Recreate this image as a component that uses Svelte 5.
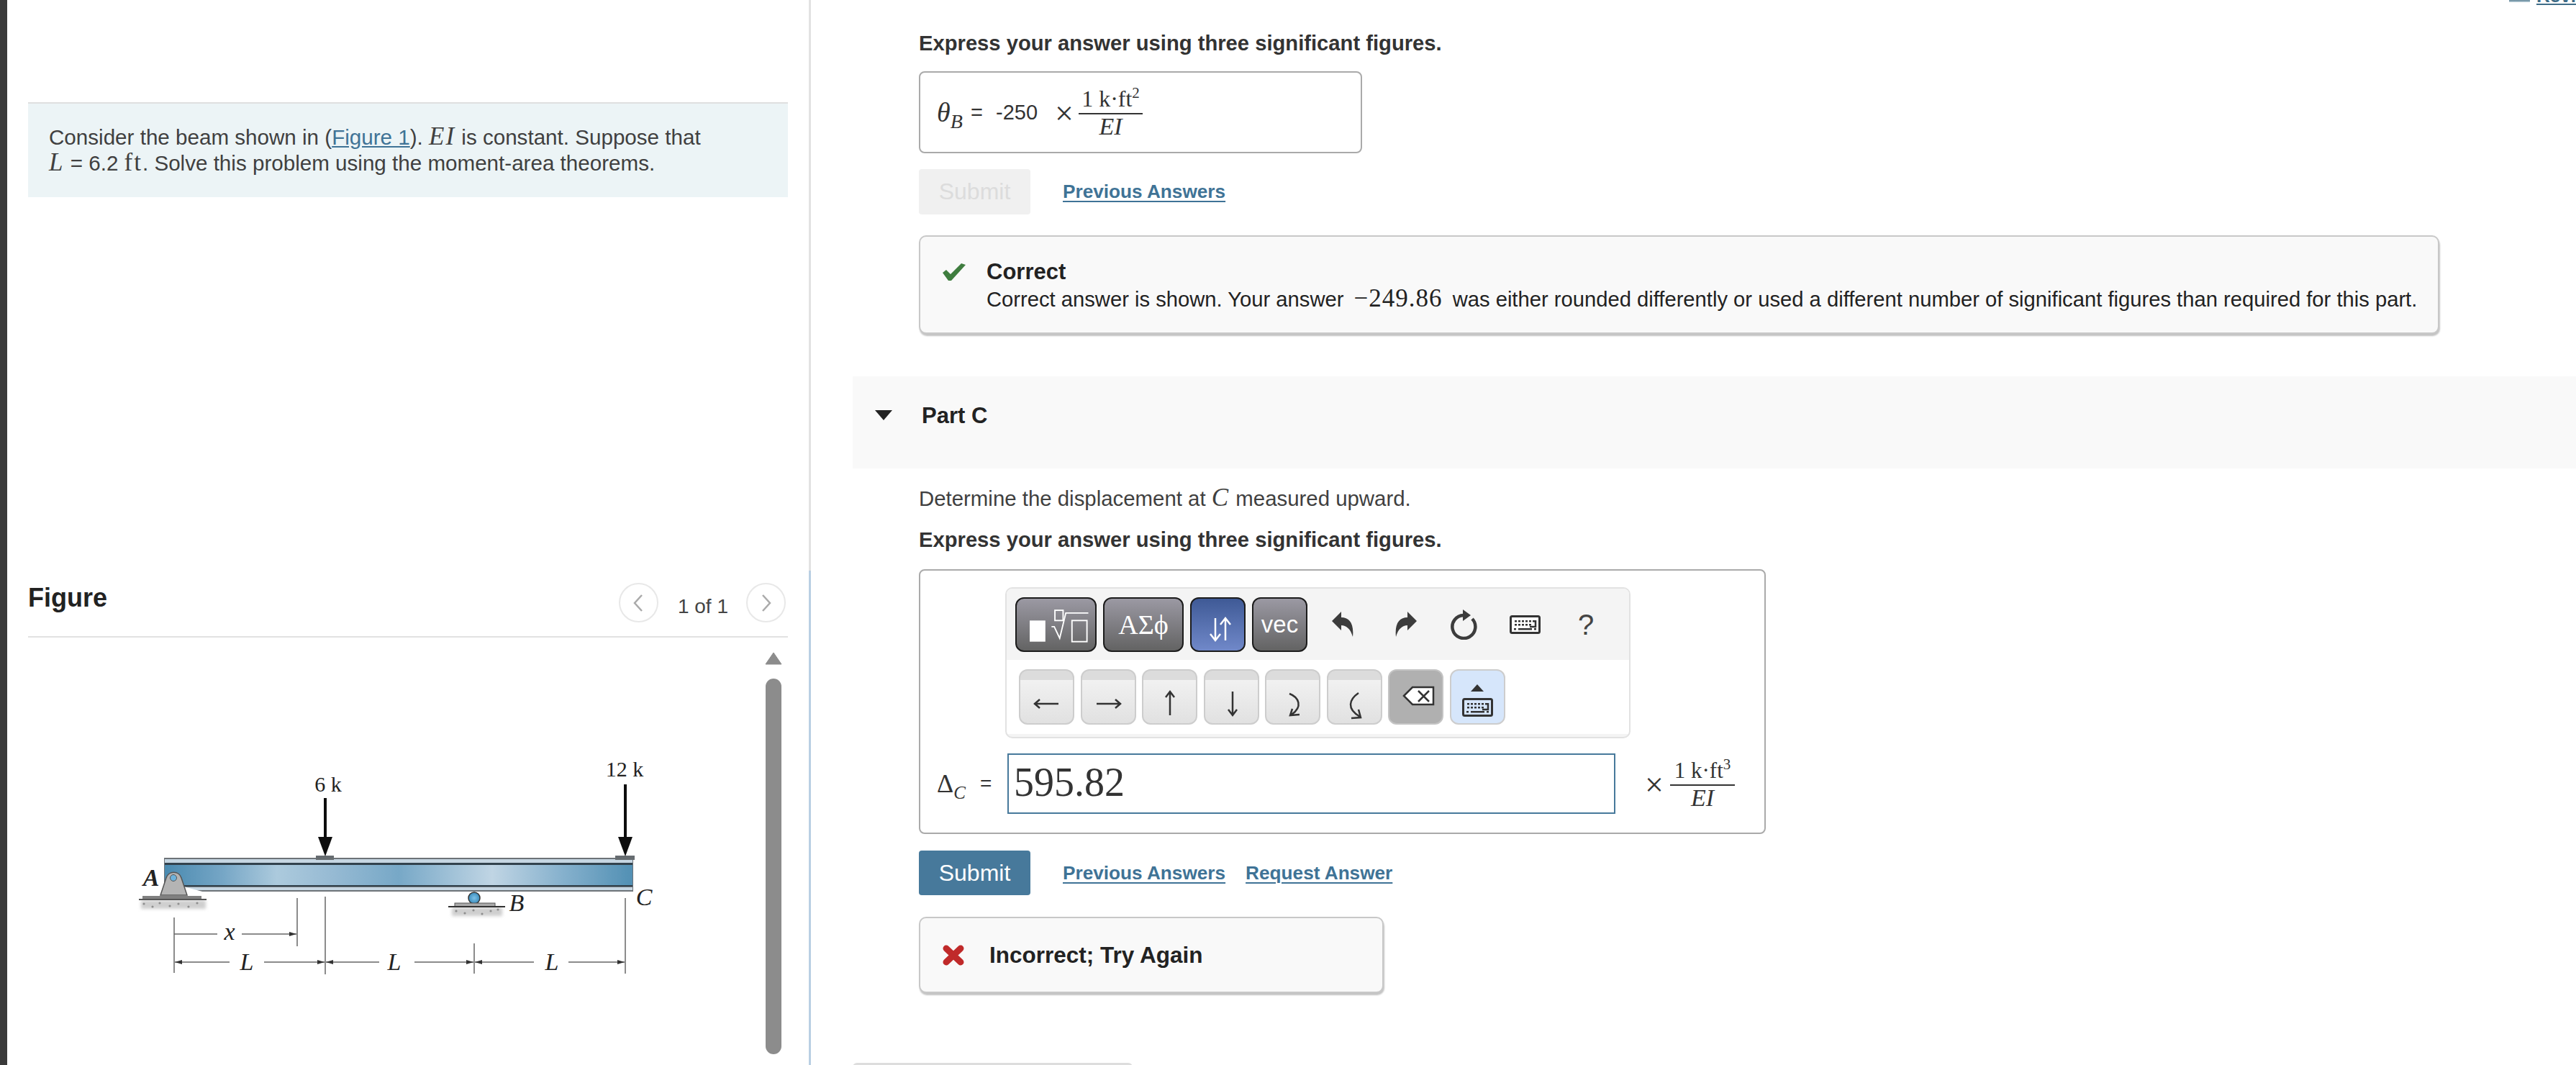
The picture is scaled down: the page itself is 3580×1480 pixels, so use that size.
<script>
  const kbDots = [];
  for (let i = 0; i < 6; i++) kbDots.push([7 + i * 5, 8]);
  for (let i = 0; i < 5; i++) kbDots.push([7 + i * 5, 13]);
  const ticks = [
    [242, 1275, 242, 1352], [413, 1248, 413, 1315], [452, 1246, 452, 1354],
    [659, 1311, 659, 1353], [869, 1248, 869, 1353],
    [242, 1298, 302, 1298], [336, 1298, 412, 1298],
    [243, 1337, 319, 1337], [367, 1337, 451, 1337],
    [453, 1337, 527, 1337], [576, 1337, 658, 1337],
    [660, 1337, 742, 1337], [790, 1337, 868, 1337]
  ];
  const heads = [
    [412, 1298, -1], [243, 1337, 1], [451, 1337, -1], [453, 1337, 1],
    [658, 1337, -1], [660, 1337, 1], [868, 1337, -1]
  ];
  const ground = [
    [200, 1256], [212, 1260], [222, 1255], [236, 1259], [248, 1256], [262, 1260], [274, 1255],
    [634, 1266], [646, 1269], [658, 1265], [670, 1270], [682, 1266], [692, 1264]
  ];
</script>

{#snippet keyboard(bg)}
  <svg class="kb" viewBox="0 0 43 26" aria-hidden="true">
    <rect x="1.5" y="1.5" width="40" height="23" rx="2" fill={bg} stroke="#333" stroke-width="3" />
    {#each kbDots as d}<rect x={d[0]} y={d[1] - 1} width="3" height="2.5" fill="#333" />{/each}
    <path d="M36 7v9H28" fill="none" stroke="#333" stroke-width="2.5" />
    <rect x="12" y="18" width="19" height="2.5" fill="#333" />
    <rect x="6" y="18" width="3" height="2.5" fill="#333" />
    <rect x="34" y="18" width="3" height="2.5" fill="#333" />
  </svg>
{/snippet}

<div class="page">
  <div class="strip"></div>

  <aside class="left">
    <div class="intro">
      <p>Consider the beam shown in (<a href="#f">Figure 1</a>). <i class="m big">EI</i> is constant. Suppose that<br /><i class="m big">L</i> = 6.2 <span class="m big">ft</span>. Solve this problem using the moment-area theorems.</p>
    </div>

    <div class="fig-head">
      <h2>Figure</h2>
      <div class="pager">
        <span class="circle"><svg viewBox="0 0 14 26" width="14" height="26"><path d="M12 2 2 13l10 11" fill="none" stroke="#aaa" stroke-width="2.5" /></svg></span>
        <span class="count">1 of 1</span>
        <span class="circle"><svg viewBox="0 0 14 26" width="14" height="26"><path d="M2 2l10 11L2 24" fill="none" stroke="#aaa" stroke-width="2.5" /></svg></span>
      </div>
    </div>

    <div class="fig-body">
      <svg class="diagram" viewBox="39 886 1020 594" aria-label="Beam diagram">
        <defs>
          <linearGradient id="web" x1="0" x2="1" y1="0" y2="0">
            <stop offset="0" stop-color="#4a8ab0" />
            <stop offset="0.12" stop-color="#74a5c5" />
            <stop offset="0.24" stop-color="#accadd" />
            <stop offset="0.36" stop-color="#96bad3" />
            <stop offset="0.5" stop-color="#77a8c7" />
            <stop offset="0.7" stop-color="#c0d5e4" />
            <stop offset="0.85" stop-color="#86b1cd" />
            <stop offset="1" stop-color="#5290b4" />
          </linearGradient>
          <radialGradient id="ball"><stop offset="0" stop-color="#7cc0e6" /><stop offset="1" stop-color="#3b8dbd" /></radialGradient>
          <filter id="soft" x="-5%" y="-5%" width="110%" height="110%"><feGaussianBlur stdDeviation="0.6" /></filter>
          <filter id="gravel" x="-10%" y="-30%" width="120%" height="160%"><feGaussianBlur stdDeviation="2" /></filter>
        </defs>

        <g filter="url(#gravel)">
          <rect x="196" y="1251" width="90" height="12" fill="#cfcfcf" />
          <rect x="628" y="1261" width="70" height="12" fill="#cfcfcf" />
        </g>
        <g filter="url(#soft)">
          {#each ground as g}<circle cx={g[0]} cy={g[1]} r="1.6" fill="#8e8e8e" />{/each}

          <rect x="228" y="1192" width="652" height="47" fill="#6d7378" />
          <rect x="229" y="1194" width="650" height="5" fill="#c6d6e2" />
          <rect x="229" y="1199" width="650" height="3" fill="#33424e" />
          <rect x="229" y="1202" width="650" height="28" fill="url(#web)" />
          <rect x="229" y="1230" width="650" height="2" fill="#33424e" />
          <rect x="229" y="1233" width="650" height="4" fill="#c6d6e2" />

          <polygon points="255,1232 285,1240 228,1240 228,1232" fill="#fff" />
          <path d="M223 1244 L231 1220 A11 11 0 0 1 252 1220 L260 1244 Z" fill="#b4b4b4" stroke="#555" stroke-width="1.5" />
          <circle cx="241" cy="1220" r="4.5" fill="#6cb2dc" stroke="#555" />
          <rect x="198" y="1245" width="82" height="6" fill="#808080" />
          <line x1="193" y1="1250" x2="287" y2="1250" stroke="#555" stroke-width="2" />

          <circle cx="659" cy="1248" r="8" fill="url(#ball)" stroke="#333" stroke-width="1.5" />
          <rect x="632" y="1255" width="56" height="5" fill="#aaa" stroke="#555" />
          <line x1="623" y1="1260" x2="702" y2="1260" stroke="#333" stroke-width="2" />

          <rect x="439" y="1189" width="25" height="6" fill="#666c70" />
          <rect x="855" y="1189" width="27" height="6" fill="#666c70" />
          <line x1="452" y1="1109" x2="452" y2="1175" stroke="#111" stroke-width="4" />
          <polygon points="442,1163 462,1163 452,1190" fill="#111" />
          <line x1="869" y1="1090" x2="869" y2="1175" stroke="#111" stroke-width="4" />
          <polygon points="859,1163 879,1163 869,1190" fill="#111" />

          {#each ticks as t}<line x1={t[0]} y1={t[1]} x2={t[2]} y2={t[3]} stroke="#666" stroke-width="1.5" />{/each}
          {#each heads as h}<polygon points={`${h[0]},${h[1]} ${h[0] + h[2] * 10},${h[1] - 3} ${h[0] + h[2] * 10},${h[1] + 3}`} fill="#333" />{/each}
        </g>

        <g class="lab">
          <text x="456" y="1100" text-anchor="middle">6 k</text>
          <text x="868" y="1079" text-anchor="middle">12 k</text>
          <text x="210" y="1231" text-anchor="middle" class="it bold">A</text>
          <text x="718" y="1266" text-anchor="middle" class="it">B</text>
          <text x="895" y="1258" text-anchor="middle" class="it">C</text>
          <text x="319" y="1306" text-anchor="middle" class="it">x</text>
          <text x="343" y="1348" text-anchor="middle" class="it">L</text>
          <text x="548" y="1348" text-anchor="middle" class="it">L</text>
          <text x="767" y="1348" text-anchor="middle" class="it">L</text>
        </g>
      </svg>

      <div class="scroll">
        <svg viewBox="0 0 24 18" width="24" height="18"><path d="M12 1 23 17H1Z" fill="#8c8c8c" stroke="#8c8c8c" stroke-linejoin="round" /></svg>
        <div class="thumb"></div>
      </div>
    </div>
  </aside>

  <div class="divider"></div>

  <main class="right">
    <div class="top">
      <span class="blurimg"></span>
      <a href="#r" class="toplink">Review</a>
    </div>

    <div class="col">
      <p class="bold-line first">Express your answer using three significant figures.</p>
      <div class="answer done">
        <i class="m theta">θ<sub>B</sub></i>
        <span class="eq1">=</span>
        <span class="val">-250</span>
        <span class="m times">×</span>
        <span class="frac"><span class="num">1 k·ft<sup>2</sup></span><span class="den"><i>EI</i></span></span>
      </div>
      <div class="actions a1">
        <button class="submit off">Submit</button>
        <a href="#p" class="act">Previous Answers</a>
      </div>
      <div class="feedback ok">
        <svg class="check" viewBox="0 0 32 24" width="32" height="24"><path d="M0 13 5 9l6 6L26 0l6 2-20 22H8Z" fill="#3f7d3f" /></svg>
        <div>
          <div class="fb-title">Correct</div>
          <div class="fb-text">Correct answer is shown. Your answer <span class="m big2">−249.86</span> was either rounded differently or used a different number of significant figures than required for this part.</div>
        </div>
      </div>
    </div>

    <div class="part">
      <svg viewBox="0 0 24 14" width="24" height="14"><path d="M0 0h24L12 14Z" fill="#222" /></svg>
      <span>Part C</span>
    </div>

    <div class="col">
      <p class="plain">Determine the displacement at <i class="m big">C</i> measured upward.</p>
      <p class="bold-line">Express your answer using three significant figures.</p>

      <div class="answer edit">
        <div class="toolbar">
          <div class="t-top">
            <button class="tb w113" aria-label="templates">
              <svg viewBox="0 0 113 76" width="109" height="72">
                <rect x="18" y="32" width="23" height="31" fill="#fff" />
                <rect x="55" y="17" width="12" height="15" fill="none" stroke="#fff" stroke-width="2" />
                <path d="M50 41h4l8 17 9-37h33" fill="none" stroke="#fff" stroke-width="2" />
                <rect x="80" y="32" width="22" height="31" fill="none" stroke="#fff" stroke-width="2" />
              </svg>
            </button>
            <button class="tb w112 greek">ΑΣϕ</button>
            <button class="tb w77 blue" aria-label="arrows">
              <svg viewBox="0 0 73 72" width="73" height="72">
                <path d="M33 27v31M26 49l7 9 7-9" fill="none" stroke="#fff" stroke-width="2.5" />
                <path d="M47 58V27M40 36l7-9 7 9" fill="none" stroke="#fff" stroke-width="2.5" />
              </svg>
            </button>
            <button class="tb w77 vec">vec</button>
            <span class="tool u1"><svg viewBox="0 0 30 36" width="30" height="36"><path d="M0 13 13 0v8c11 0 18 8 16 27-3-11-9-16-16-16v7Z" fill="#3c3c3c" /></svg></span>
            <span class="tool u1"><svg viewBox="0 0 30 36" width="30" height="36"><path d="M30 13 17 0v8C6 8-1 16 1 35c3-11 9-16 16-16v7Z" fill="#3c3c3c" /></svg></span>
            <span class="tool u2"><svg viewBox="0 0 40 42" width="40" height="42"><path d="M31 13A16 16 0 1 1 19 8" fill="none" stroke="#3c3c3c" stroke-width="4.5" /><path d="M18 0 29 8 18 16Z" fill="#3c3c3c" /></svg></span>
            <span class="tool u3">{@render keyboard('#fff')}</span>
            <span class="tool u4 help">?</span>
          </div>
          <div class="t-low">
            <button class="key" aria-label="left"><svg class="glyph" viewBox="0 0 77 77"><path d="M22 48h33M29 42l-7 6 7 6" /></svg></button>
            <button class="key" aria-label="right"><svg class="glyph" viewBox="0 0 77 77"><path d="M22 48h33M48 42l7 6-7 6" /></svg></button>
            <button class="key" aria-label="up"><svg class="glyph" viewBox="0 0 77 77"><path d="M39 31v33M33 39l6-8 6 8" /></svg></button>
            <button class="key" aria-label="down"><svg class="glyph" viewBox="0 0 77 77"><path d="M40 31v33M34 56l6 8 6-8" /></svg></button>
            <button class="key" aria-label="clockwise"><svg class="glyph" viewBox="0 0 77 77"><path d="M34 34c13 5 19 18 3 29M38 55l-3 9 13-1" /></svg></button>
            <button class="key" aria-label="counter clockwise"><svg class="glyph" viewBox="0 0 77 77"><path d="M44 33C31 42 27 55 46 66M34 68l13-1-3-11" /></svg></button>
            <button class="key del" aria-label="delete"><svg class="glyph" viewBox="0 0 77 77"><path class="fillw" d="M22 37 34 25h29v24H34Z" /><path d="M42 30l15 15M57 30 42 45" /></svg></button>
            <button class="key kbd" aria-label="keyboard">
              <svg class="tri" viewBox="0 0 18 10" width="18" height="10"><path d="M9 0 18 10H0Z" /></svg>
              {@render keyboard('#d6e6fb')}
            </button>
          </div>
        </div>

        <div class="eq">
          <span class="m delta">Δ<sub><i>C</i></sub></span>
          <span class="eq2">=</span>
          <div class="input">595.82</div>
          <span class="m times t2">×</span>
          <span class="frac f2"><span class="num">1 k·ft<sup>3</sup></span><span class="den"><i>EI</i></span></span>
        </div>
      </div>

      <div class="actions a2">
        <button class="submit">Submit</button>
        <a href="#p" class="act">Previous Answers</a>
        <a href="#q" class="act second">Request Answer</a>
      </div>

      <div class="feedback bad">
        <svg viewBox="0 0 30 29" width="30" height="29"><path d="M5 5 25 24M25 5 5 24" fill="none" stroke="#c02a2a" stroke-width="9" stroke-linecap="round" /></svg>
        <span class="fb-title big3">Incorrect; Try Again</span>
      </div>
    </div>

    <div class="tab"></div>
  </main>
</div>

<style>
  :global(body) {
    margin: 0;
    background: #fff;
  }
  .page {
    width: 3580px;
    height: 1480px;
    display: flex;
    overflow: hidden;
    font-family: "Liberation Sans", Arial, sans-serif;
    color: #333;
    font-size: 29.4px;
  }
  p { margin: 0; }
  a { color: #3f7396; }
  button { font-family: inherit; padding: 0; cursor: pointer; }
  .strip { width: 10px; flex: none; background: #3a3a3a; }
  .left { width: 1114px; flex: none; padding: 0 29px; box-sizing: border-box; }
  .divider {
    width: 3px;
    flex: none;
    background: linear-gradient(#e2e2e2 793px, #b9cfe3 793px);
  }
  .intro {
    margin-top: 142px;
    height: 132px;
    box-sizing: border-box;
    border-top: 2px solid #dfdfdf;
    background: #ecf4f6;
    padding: 28px 29px;
    line-height: 35px;
    font-size: 29.6px;
    color: #404040;
    white-space: nowrap;
  }
  .m { font-family: "Liberation Serif", "Times New Roman", serif; }
  .big { font-size: 35px; line-height: 1; letter-spacing: 2px; }
  .big2 { font-size: 35px; line-height: 1; margin: 0 6px; letter-spacing: 1px; }
  .fig-head {
    margin-top: 536px;
    height: 74px;
    border-bottom: 2px solid #e2e2e2;
    display: flex;
    justify-content: space-between;
    align-items: flex-start;
  }
  h2 { margin: 0; font-size: 36px; line-height: 42px; color: #222; font-weight: 700; }
  .pager { display: flex; margin-right: 3px; }
  .circle {
    width: 55px;
    height: 55px;
    box-sizing: border-box;
    border: 2px solid #e8e8e8;
    border-radius: 50%;
    display: flex;
    align-items: center;
    justify-content: center;
  }
  .count { font-size: 28px; line-height: 32px; padding: 17px 25px 0 27px; color: #444; }
  .fig-body { display: flex; height: 594px; margin-right: -1px; }
  .diagram { width: 1020px; height: 594px; flex: none; }
  .lab text { font-family: "Liberation Serif", serif; font-size: 30px; fill: #222; }
  .lab .it { font-style: italic; font-size: 34px; }
  .lab .bold { font-weight: 700; font-size: 34px; }
  .scroll {
    width: 24px;
    margin-left: 4px;
    padding-top: 20px;
    display: flex;
    flex-direction: column;
    align-items: center;
    flex: none;
  }
  .thumb { width: 22px; height: 522px; margin-top: 19px; border-radius: 11px; background: #8c8c8c; }

  .right { flex: 1; min-width: 0; overflow: hidden; }
  .top {
    height: 7px;
    overflow: hidden;
    display: flex;
    align-items: flex-end;
    padding-left: 2360px;
    box-sizing: border-box;
    width: 2453px;
  }
  .blurimg {
    width: 29px;
    height: 3px;
    margin-bottom: 4px;
    flex: none;
    background: linear-gradient(#5f8396, #bcd0da);
  }
  .toplink {
    margin-left: 9px;
    font-weight: 700;
    font-size: 26px;
    line-height: 22px;
    flex: none;
    text-decoration: none;
    border-bottom: 2px solid #3f6d88;
    color: #3f6d88;
  }
  .col { padding-left: 150px; }
  .bold-line { font-weight: 700; font-size: 29.2px; line-height: 36px; margin-top: 21px; color: #333; }
  .first { margin-top: 35px; }
  .plain { line-height: 36px; margin-top: 23px; color: #404040; }
  .answer {
    border: 2px solid #aaa;
    border-radius: 8px;
    box-sizing: border-box;
    margin-top: 23px;
  }
  .done {
    width: 616px;
    height: 114px;
    margin-top: 21px;
    display: flex;
    align-items: center;
    padding-left: 23px;
    font-size: 29px;
  }
  .theta { font-size: 38px; width: 47px; white-space: nowrap; }
  .theta sub { font-size: 28px; line-height: 0; vertical-align: -9px; }
  .eq1 { width: 35px; }
  .val { width: 82px; }
  .times { font-size: 46px; width: 33px; line-height: 1; font-weight: 400; color: #333; margin-top: 4px; }
  .frac {
    display: inline-flex;
    flex-direction: column;
    align-items: stretch;
    text-align: center;
    font-family: "Liberation Serif", serif;
    font-size: 32px;
    line-height: 33px;
    width: 89px;
    white-space: nowrap;
    color: #333;
  }
  .num { border-bottom: 2px solid #333; height: 36px; }
  .num sup { font-size: 21px; line-height: 0; vertical-align: 12px; }
  .den { font-size: 34px; }
  .actions { display: flex; align-items: center; margin-top: 22px; }
  .submit {
    width: 155px;
    height: 62px;
    border: 0;
    border-radius: 4px;
    background: #47799b;
    color: #fff;
    font-size: 32px;
  }
  .off { background: #f0f0f0; color: #dcdcdc; height: 63px; cursor: default; }
  .act { margin-left: 45px; font-size: 26.2px; font-weight: 700; text-underline-offset: 4px; text-decoration-thickness: 2px; }
  .second { margin-left: 28px; }
  .feedback {
    background: #f9f9f9;
    border: 2px solid #c8c8c8;
    border-radius: 10px;
    box-shadow: 1px 3px 2px #c4c4c4;
    box-sizing: border-box;
    display: flex;
    color: #222;
  }
  .ok {
    margin-top: 29px;
    width: 2113px;
    height: 137px;
    padding: 30px 0 0 31px;
    gap: 29px;
  }
  .check { margin-top: 7px; flex: none; }
  .fb-title { font-weight: 700; font-size: 31px; line-height: 38px; }
  .fb-text { font-size: 29.2px; line-height: 38px; white-space: nowrap; }
  .bad {
    margin-top: 30px;
    width: 646px;
    height: 106px;
    align-items: center;
    padding-left: 31px;
    gap: 35px;
  }
  .part {
    margin: 59px 0 0 58px;
    height: 128px;
    padding: 0 0 18px 31px;
    box-sizing: border-box;
    background: #f9f9f9;
    display: flex;
    align-items: center;
    gap: 41px;
    font-weight: 700;
    font-size: 31px;
    color: #222;
  }
  .part svg { margin-top: -2px; }

  .edit { width: 1177px; height: 368px; }
  .toolbar {
    width: 869px;
    height: 210px;
    margin: 23px 0 0 118px;
    box-sizing: border-box;
    border: 2px solid #e2e2e2;
    border-radius: 10px;
    background: linear-gradient(#fff calc(100% - 4px), #f4f4f4 0);
    overflow: hidden;
  }
  .t-top {
    height: 99px;
    background: #f4f4f4;
    display: flex;
    padding: 12px 0 0 12px;
    box-sizing: border-box;
    gap: 9px;
  }
  .tb {
    height: 76px;
    flex: none;
    border: 2px solid #1c1c1c;
    border-radius: 12px;
    background: linear-gradient(#9b99a3, #636363);
    color: #fff;
    display: flex;
    align-items: center;
    justify-content: center;
    box-sizing: border-box;
    overflow: hidden;
  }
  .w113 { width: 113px; }
  .w112 { width: 112px; }
  .w77 { width: 77px; }
  .blue { background: linear-gradient(#3f5a96, #7088c9); }
  .greek { font-family: "Liberation Serif", serif; font-size: 38px; }
  .vec { font-size: 33px; }
  .tool { flex: none; display: flex; align-items: center; justify-content: center; height: 76px; margin-right: -9px; }
  .u1 { width: 88px; }
  .u2 { width: 74px; }
  .u3 { width: 94px; }
  .u4 { width: 76px; }
  .tb + .tool { margin-left: -4px; }
  .help { font-size: 40px; color: #444; }
  .kb { width: 43px; height: 26px; display: block; }
  .t-low {
    display: flex;
    gap: 8.5px;
    padding: 13px 0 0 17px;
  }
  .key {
    width: 77px;
    height: 77px;
    flex: none;
    border: 2px solid #cdcdcd;
    border-radius: 12px;
    box-sizing: border-box;
    background: linear-gradient(#dcdcdc 0 13px, #f1f1f1 13px, #e1e1e1);
    display: block;
    overflow: hidden;
  }
  .glyph { display: block; width: 77px; height: 77px; margin: -2px; }
  .glyph path { fill: none; stroke: #333; stroke-width: 2.5; }
  .del { background: #b0b0b0; border-color: #c4c4c4; }
  .glyph path.fillw { fill: #fff; }
  .kbd {
    background: #d6e6fb;
    display: flex;
    flex-direction: column;
    align-items: center;
  }
  .tri { width: 18px; height: 10px; margin-top: 19px; display: block; }
  .tri path { fill: #333; }
  .kbd .kb { margin-top: 9px; }
  .eq { display: flex; align-items: center; margin-top: 21px; padding-left: 23px; }
  .delta { font-size: 36px; width: 60px; white-space: nowrap; }
  .delta sub { font-size: 25px; line-height: 0; vertical-align: -9px; }
  .eq2 { width: 38px; font-size: 28px; }
  .input {
    width: 845px;
    height: 84px;
    box-sizing: border-box;
    border: 2px solid #47799b;
    padding-left: 7px;
    font-family: "Liberation Serif", serif;
    font-size: 56px;
    line-height: 76px;
    color: #333;
  }
  .t2 { margin-left: 41px; margin-right: 2px; }
  .f2 { font-size: 31px; width: 90px; }
  .a2 { margin-top: 23px; }
  .big3 { font-size: 31.5px; }
  .tab {
    margin: 97px 0 0 58px;
    width: 389px;
    height: 8px;
    background: #ddd;
    border-radius: 6px 6px 0 0;
  }
</style>
